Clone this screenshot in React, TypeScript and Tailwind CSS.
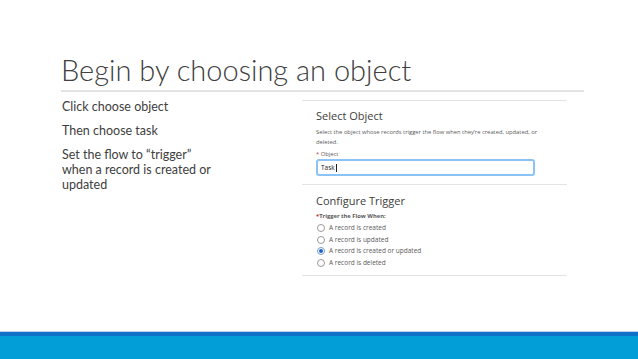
import React from "react";

const triggers = [
  { label: "A record is created", checked: false },
  { label: "A record is updated", checked: false },
  { label: "A record is created or updated", checked: true },
  { label: "A record is deleted", checked: false },
];

function Radio({ checked }: { checked: boolean }) {
  return (
    <span
      className={
        "flex h-[8px] w-[8px] shrink-0 items-center justify-center rounded-full border bg-white " +
        (checked ? "border-[#7a9cc4]" : "border-[#9a9a9a]")
      }
    >
      {checked && <span className="h-[4px] w-[4px] rounded-full bg-[#1b63c9]" />}
    </span>
  );
}

export default function App() {
  return (
    <div className="flex h-[359px] w-[638px] flex-col overflow-hidden bg-white font-['Lato','Liberation_Sans',sans-serif] text-[#404040]">
      <div className="flex-1">
        {/* Title */}
        <div className="pl-[61px] pt-[52px]">
          <h1 className="text-[29px] font-light leading-[36px] text-[#404040]">Begin by choosing an object</h1>
          <div className="mt-[2px] h-[2px] w-[523px] bg-[#e3e3e3]" />
        </div>

        <div className="flex">
          {/* Bullets */}
          <div className="ml-[62px] mt-[7px] flex w-[160px] shrink-0 flex-col gap-[9px] text-[12.5px] leading-[15px]">
            <p>Click choose object</p>
            <p>Then choose task</p>
            <p>Set the flow to “trigger” when a record is created or updated</p>
          </div>

          {/* Screenshot panel */}
          <div className="ml-[80px] mt-[8px] w-[265px] font-['Open_Sans','Liberation_Sans',sans-serif] text-[#3e3e3c]">
            <div className="h-px bg-[#e4e4e4]" />
            <div className="px-[14px] pb-[8px] pt-[8px]">
              <div className="text-[11px] leading-[14px]">Select Object</div>
              <p className="mt-[4px] w-[225px] text-[5.8px] leading-[10px] text-[#5a5a5a]">
                Select the object whose records trigger the flow when they’re created, updated, or deleted.
              </p>
              <div className="mt-[3px] text-[5.8px] leading-[8px] text-[#5a5a5a]">
                <span className="text-[#c23934]">*</span> Object
              </div>
              <div className="mt-px flex h-[17px] w-[219px] items-center rounded-[3px] border-2 border-[#8cc3f7] px-[3px] text-[6.5px] text-[#222]">
                Task<span className="ml-px h-[8px] w-px bg-[#222]" />
              </div>
            </div>
            <div className="h-px bg-[#e4e4e4]" />
            <div className="px-[14px] pb-[6px] pt-[9px]">
              <div className="text-[11px] leading-[14px]">Configure Trigger</div>
              <div className="mt-[4px] text-[5.8px] font-bold leading-[8px] text-[#5a5a5a]">
                <span className="text-[#c23934]">*</span>Trigger the Flow When:
              </div>
              <div className="mt-[2px] flex flex-col">
                {triggers.map((t) => (
                  <div key={t.label} className="flex h-[11.7px] items-center gap-[4px] pl-[1px] text-[6.5px] text-[#5a5a5a]">
                    <Radio checked={t.checked} />
                    <span>{t.label}</span>
                  </div>
                ))}
              </div>
            </div>
            <div className="h-px bg-[#e4e4e4]" />
          </div>
        </div>
      </div>

      {/* Bottom band */}
      <div className="h-px bg-[#b9d3ee]" />
      <div className="h-[4px] bg-[#1170c8]" />
      <div className="h-[23px] bg-[#029ed7]" />
    </div>
  );
}
